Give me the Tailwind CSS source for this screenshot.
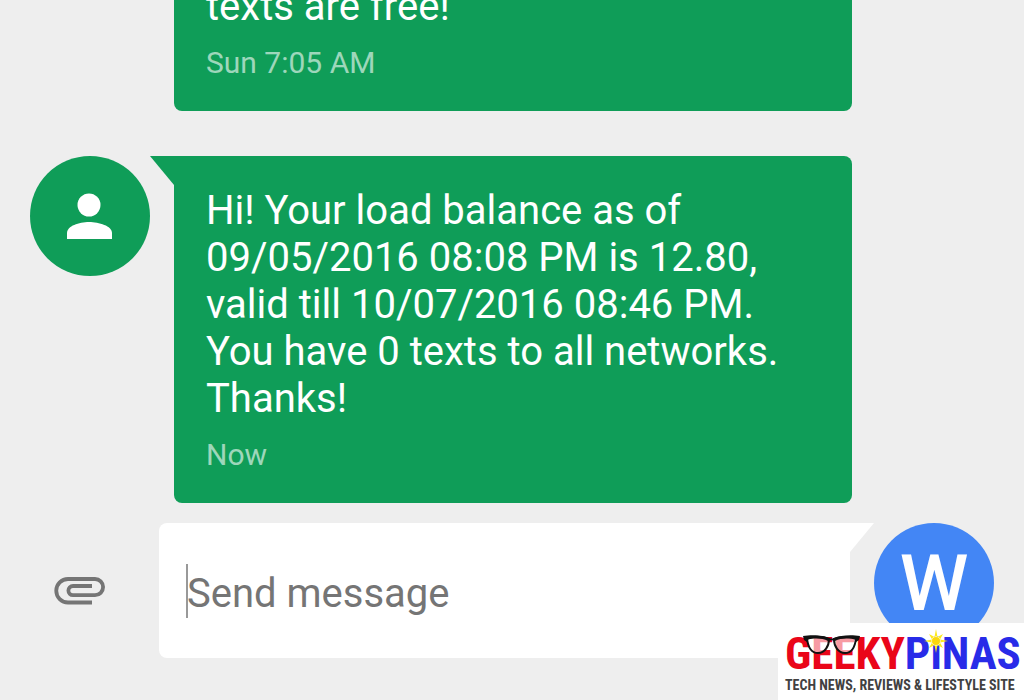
<!DOCTYPE html>
<html lang="en">
    <head>
        <meta charset="utf-8">
        <title>Messages</title>
        <meta name="viewport" content="width=device-width, initial-scale=1">
        <script src="https://cdn.jsdelivr.net/npm/@tailwindcss/browser@4"></script>
    </head>
    <body class="relative flex h-screen flex-col overflow-hidden bg-[#eeeeee] font-[Roboto,sans-serif]">
        <main class="flex min-h-0 grow flex-col justify-end gap-[45px] overflow-hidden pr-[172px] pl-[30px]">
            <div class="flex shrink-0 items-start">
                <div class="ml-36 grow rounded-lg bg-[#0f9d58] px-8 pt-[31px] pb-[31px] text-white">
                    <p class="text-[40px] leading-[47px]">texts are free!</p>
                    <p class="mt-4 text-[30px] leading-[34px] text-white/60">Sun 7:05 AM</p>
                </div>
            </div>
            <div class="flex shrink-0 items-start">
                <div class="flex size-[120px] shrink-0 items-center justify-center rounded-full bg-[#0f9d58]">
                    <svg class="size-[70px]" viewBox="0 0 70 70" fill="#fff">
                        <circle cx="34" cy="24" r="11.5"/>
                        <path d="M12 58v-6c0-7 12-11 22-11s23 4 23 11v6z"/>
                    </svg>
                </div>
                <svg class="h-[29px] w-6 shrink-0" viewBox="0 0 24 29" fill="#0f9d58">
                    <path d="M0 0h24v29z"/>
                </svg>
                <div class="grow rounded-lg rounded-tl-none bg-[#0f9d58] px-8 pt-[31px] pb-[31px] text-white">
                    <p class="text-[40px] leading-[47px]">Hi! Your load balance as of<br>09/05/2016 08:08 PM is 12.80,<br>valid till 10/07/2016 08:46 PM.<br>You have 0 texts to all networks.<br>Thanks!</p>
                    <p class="mt-4 text-[30px] leading-[34px] text-white/60">Now</p>
                </div>
            </div>
        </main>
        <form class="mt-5 mb-[42px] flex shrink-0 items-start pr-[30px]">
            <button type="button" aria-label="Attach" class="flex h-[135px] w-[159px] shrink-0 items-center justify-center">
                <svg class="h-[30px] w-[52px]" viewBox="0 0 52 30" fill="none" stroke="#757575" stroke-width="3.8">
                    <path d="M38 26.5H14A11.75 11.75 0 0 1 14 3H41A8.1 8.1 0 0 1 41 19.2H19A4.6 4.6 0 0 1 19 10H38"/>
                </svg>
            </button>
            <div class="flex h-[135px] grow items-center rounded-lg rounded-tr-none bg-white pl-[27px]">
                <span class="h-[54px] w-0.5 shrink-0 bg-[#999999]"></span>
                <label for="message" class="sr-only">Message</label>
                <input id="message" type="text" placeholder="Send message" class="-ml-px h-20 w-full pt-1.5 text-[40px] placeholder:text-[#757575]">
            </div>
            <svg class="h-[29px] w-6 shrink-0" viewBox="0 0 24 29" fill="#fff">
                <path d="M0 0h24L0 29z"/>
            </svg>
            <div class="flex size-[120px] shrink-0 items-center justify-center rounded-full bg-[#4386f5] text-[78px] font-medium text-white">W</div>
        </form>
        <aside class="absolute right-0 bottom-0 h-[77px] w-[246px] bg-white pt-2 pl-[7px] font-['Roboto_Condensed','Liberation_Sans_Narrow','Liberation_Sans',sans-serif]">
            <p class="text-[45px] leading-[46px] font-bold whitespace-nowrap"><span class="text-[#ea0519]">GEEKY</span><span class="text-[#282be8]">PiNAS</span></p>
            <p class="text-[14px] leading-4 font-bold whitespace-nowrap text-[#414141]">TECH NEWS, REVIEWS &amp; LIFESTYLE SITE</p>
            <!-- glasses -->
            <svg class="absolute top-3 left-6 h-5 w-[60px]" viewBox="0 0 60 20">
                <g fill="#fff" fill-opacity=".6" stroke="#111" stroke-width="2">
                    <path d="M5 3.5C11 1.5 20 1.5 27 4C27 11 23 18 16 18C9 18 6 12 5 3.5z"/>
                    <path d="M32 4C39 1.5 49 1.5 54 3.5C53 12 50 18 43 18C36 18 32 11 32 4z"/>
                </g>
                <path d="M1 1C9-.5 22 0 27 3Q30 4 32 3C38 0 50-.5 58 1L57 5L54 7V5C48 3 39 3 33 6Q30 4.500 26 6C20 3 11 3 5 5V7L2 5z" fill="#111"/>
            </svg>
            <!-- sun -->
            <svg class="absolute top-1.5 left-[146px] size-6" viewBox="-12 -12 24 24" fill="#fdea18">
                <path d="M0-12L1.500-4L7-7L4-1.500L12 0L4 1.500L7 7L1.500 4L0 12L-1.500 4L-7 7L-4 1.500L-12 0L-4-1.500L-7-7L-1.500-4z"/>
                <circle r="4.500" fill="#fbd80c" stroke="#fff" stroke-width=".6"/>
            </svg>
        </aside>
    </body>
</html>
